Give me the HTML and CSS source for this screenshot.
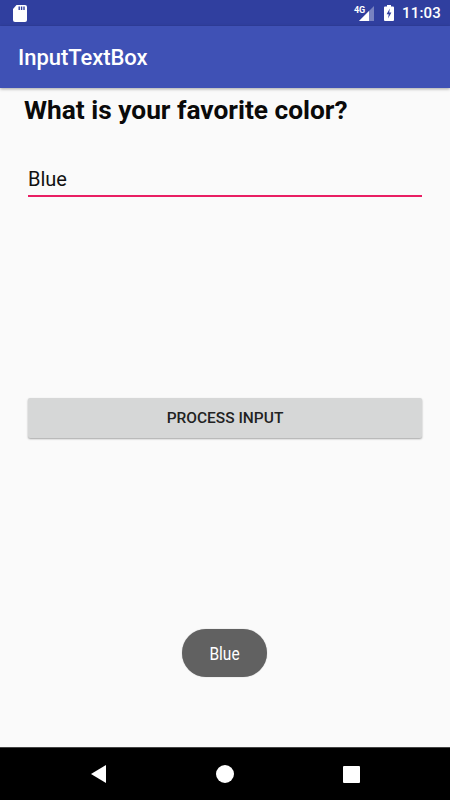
FILE: index.html
```html
<!DOCTYPE html>
<html lang="en">
<head>
<meta charset="utf-8">
<title>InputTextBox</title>
<link rel="stylesheet" href="styles.css">
</head>
<body>
<div class="phone">
  <div class="status">
    <svg class="sd" viewBox="0 0 14 17" width="14" height="17"><path d="M3.500 0H12a2 2 0 0 1 2 2v13a2 2 0 0 1-2 2H2a2 2 0 0 1-2-2V4z" fill="#fff"/><path d="M5.500 1.500h1.400v3.500H5.500zM7.900 1.500h1.400v3.500H7.900zM10.300 1.500h1.400v3.500h-1.400z" fill="#303f9f"/></svg>
    <div class="status-right">
      <div class="signal">
        <svg viewBox="0 0 15 15" width="15" height="15"><path d="M15 0V15H0z" fill="#fff" fill-opacity=".35"/><path d="M10 5V15H0z" fill="#fff"/></svg>
        <span class="net">4G</span>
      </div>
      <svg class="batt" viewBox="0 0 10 16" width="10" height="16"><path d="M3 1.500V0h4v1.500h2a1 1 0 0 1 1 1V15a1 1 0 0 1-1 1H1a1 1 0 0 1-1-1V2.500a1 1 0 0 1 1-1z" fill="#fff"/><path d="M5.800 3.500 2.600 9.300h2.100l-.6 4.200 3.300-6.100H5.200z" fill="#303f9f"/></svg>
      <span class="time">11:03</span>
    </div>
  </div>
  <header class="appbar">InputTextBox</header>
  <main class="content">
    <h1 class="question">What is your favorite color?</h1>
    <div class="field">Blue</div>
    <button class="action">PROCESS INPUT</button>
    <div class="toast-row"><div class="toast"><span class="toast-text">Blue</span></div></div>
  </main>
  <nav class="navbar">
    <svg viewBox="0 0 15 18" width="15" height="18"><path d="M15 0V18L0 9z" fill="#fff"/></svg>
    <svg viewBox="0 0 18 18" width="18" height="18"><circle cx="9" cy="9" r="9" fill="#fff"/></svg>
    <svg viewBox="0 0 17 17" width="17" height="17"><rect width="17" height="17" rx="1" fill="#fff"/></svg>
  </nav>
</div>
</body>
</html>
```
FILE: styles.css
```css
* { box-sizing: border-box; }
html, body { margin: 0; padding: 0; }
body { font-family: Roboto, "Liberation Sans", sans-serif; }
.phone { width: 450px; height: 800px; display: flex; flex-direction: column; background: #fafafa; overflow: hidden; }
.status { height: 26px; background: #303f9f; display: flex; align-items: center; justify-content: space-between; padding: 0 9px 0 13px; flex: none; }
.sd { margin-top: 1px; }
.status-right { display: flex; align-items: center; }
.signal { position: relative; width: 15px; height: 15px; margin-right: 10px; margin-top: 1px; }
.signal svg { display: block; }
.net { position: absolute; left: -5px; top: 0; font-size: 9px; font-weight: 700; line-height: 9px; color: #fff; }
.batt { margin-right: 8px; }
.time { font-size: 15px; font-weight: 500; color: #fff; line-height: 26px; letter-spacing: .2px; }
.appbar { height: 62px; flex: none; background: #3f51b5; color: #fff; font-size: 22px; font-weight: 500; line-height: 64px; padding-left: 18px; box-shadow: 0 1px 3px rgba(0,0,0,.35); position: relative; z-index: 1; letter-spacing: -.05px; }
.content { flex: 1; display: flex; flex-direction: column; padding: 0 28px; min-height: 0; }
.question { margin: 6px 0 0 -4px; font-size: 26.300px; font-weight: 700; line-height: 32px; color: #0a0a0a; white-space: nowrap; }
.field { margin-top: 36px; height: 35px; border-bottom: 2px solid #e91e63; font-size: 20px; line-height: 34px; color: #111; }
.action { margin-top: 201px; height: 40px; width: 100%; border: 0; border-radius: 2px; background: #d6d7d7; color: #222; font-family: inherit; font-size: 15.500px; font-weight: 500; box-shadow: 0 1px 2px rgba(0,0,0,.35); padding: 0; }
.toast-row { margin-top: 191px; display: flex; justify-content: center; padding-right: 1px; }
.toast { width: 85px; height: 48px; border-radius: 24px; background: #616161; color: #fff; font-size: 18px; line-height: 50px; text-align: center; box-shadow: 0 0 1px rgba(0,0,0,.4); }
.toast-text { display: inline-block; transform: scaleX(.86); }
.navbar { height: 53px; flex: none; background: #000; display: flex; align-items: center; padding: 0 90px 0 91px; justify-content: space-between; border-top: 1px solid #444; }
```
